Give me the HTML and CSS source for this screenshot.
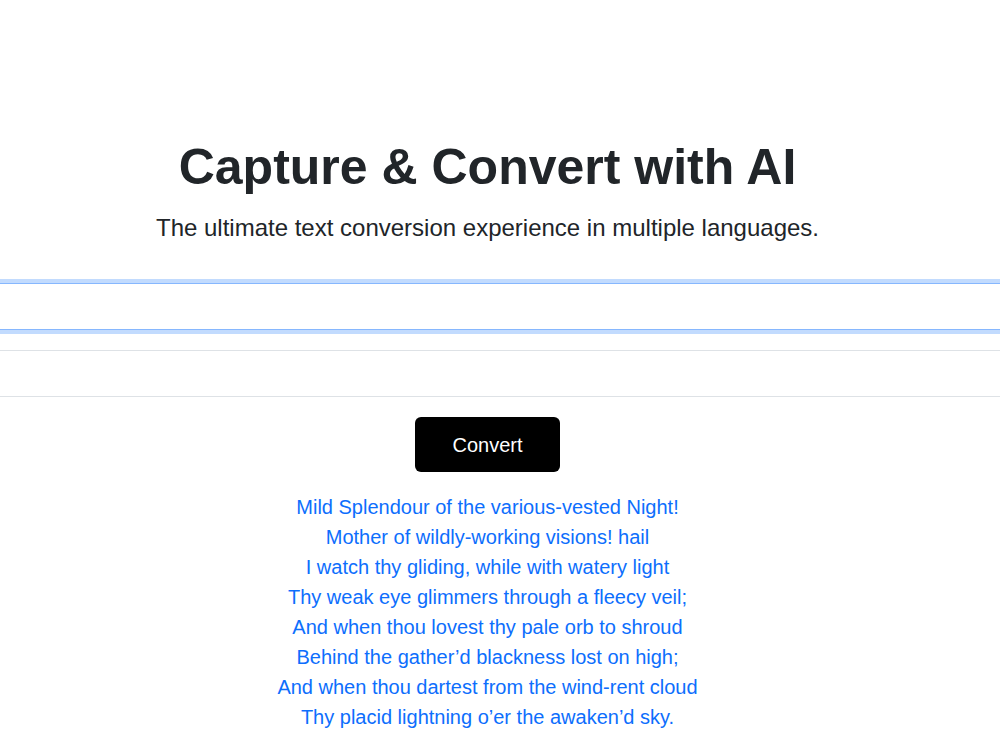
FILE: index.html
```html
<!DOCTYPE html>
<html lang="en">
<head>
<meta charset="utf-8">
<title>Capture &amp; Convert with AI</title>
<link rel="stylesheet" href="styles.css">
</head>
<body>
<main class="page">
  <header class="hero">
    <h1 class="hero-title">Capture &amp; Convert with AI</h1>
    <p class="hero-lead">The ultimate text conversion experience in multiple languages.</p>
  </header>
  <section class="converter">
    <input class="field field-focused" type="text" aria-label="Source text">
    <input class="field" type="text" aria-label="Target language">
    <button class="convert-btn" type="button">Convert</button>
    <div class="poem">
      <div>Mild Splendour of the various-vested Night!</div>
      <div>Mother of wildly-working visions! hail</div>
      <div>I watch thy gliding, while with watery light</div>
      <div>Thy weak eye glimmers through a fleecy veil;</div>
      <div>And when thou lovest thy pale orb to shroud</div>
      <div>Behind the gather’d blackness lost on high;</div>
      <div>And when thou dartest from the wind-rent cloud</div>
      <div>Thy placid lightning o’er the awaken’d sky.</div>
    </div>
  </section>
</main>
</body>
</html>
```
FILE: styles.css
```css
html, body {
  margin: 0;
  padding: 0;
  background: #fff;
}
body {
  font-family: "Liberation Sans", Arial, sans-serif;
  color: #212529;
  overflow-x: hidden;
}
.page {
  overflow: hidden;
  padding-right: 25px;
}
.hero {
  padding-top: 137px;
  text-align: center;
}
.hero-title {
  margin: 0 0 13px;
  font-size: 50px;
  line-height: 60px;
  font-weight: 700;
  color: #212529;
}
.hero-lead {
  margin: 0;
  font-size: 24px;
  line-height: 36px;
}
.converter {
  display: flex;
  flex-direction: column;
  align-items: center;
  gap: 20px;
  padding-top: 37px;
}
.field {
  display: block;
  box-sizing: border-box;
  width: calc(100% + 85px);
  margin: 0 -50px 0 -35px;
  height: 47px;
  padding: 0 16px;
  border: 1px solid #dee2e6;
  border-radius: 6px;
  font-family: inherit;
  font-size: 20px;
  background: #fff;
  outline: none;
}
.field-focused {
  border-color: #86b7fe;
  box-shadow: 0 0 0 4px rgba(13, 110, 253, 0.25);
}
.convert-btn {
  width: 145px;
  height: 55px;
  border: 0;
  border-radius: 6px;
  background: #000;
  color: #fff;
  font-family: inherit;
  font-size: 20px;
  line-height: 30px;
  cursor: pointer;
}
.poem {
  color: #0d6efd;
  font-size: 20px;
  line-height: 30px;
  text-align: center;
}
```
